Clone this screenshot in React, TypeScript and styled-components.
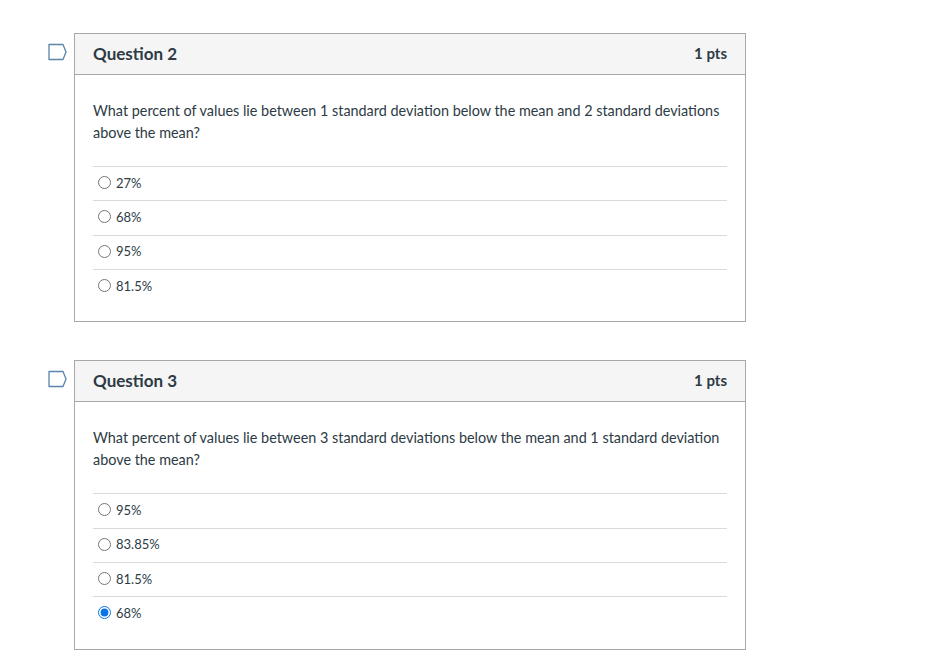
import styled, { createGlobalStyle } from 'styled-components';

const GlobalStyle = createGlobalStyle`
  body {
    margin: 0;
    background: #fff;
    font-family: Lato, "Open Sans", sans-serif;
    color: #2d3b45;
  }
`

const Page = styled.div`
  display: flex;
  flex-direction: column;
  gap: 38px;
  padding: 33px 0 0 48px;
`

const QuestionRow = styled.div`
  display: flex;
  align-items: flex-start;
  gap: 7px;
`

const Flag = styled.svg`
  flex: none;
  width: 19px;
  height: 18px;
  margin-top: 10px;
`

const Card = styled.section`
  width: 672px;
  box-sizing: border-box;
  border: 1px solid #a8a8a8;
`

const Header = styled.header`
  display: flex;
  align-items: center;
  justify-content: space-between;
  box-sizing: content-box;
  height: 38px;
  padding: 0 18px 2px;
  background: #f5f5f5;
  border-bottom: 1px solid #a8a8a8;
`

const Title = styled.h3`
  margin: 0;
  font-size: 17px;
  font-weight: 700;
  color: #2d3b45;
`

const Points = styled.span`
  font-size: 15px;
  font-weight: 700;
  color: #2d3b45;
`

const Body = styled.div`
  padding: 25px 18px 18px;
`

const Prompt = styled.p`
  margin: 0 0 22px;
  font-size: 14.4px;
  line-height: 22px;
`

const Answers = styled.ul`
  list-style: none;
  margin: 0;
  padding: 0;
`

const Answer = styled.li`
  display: flex;
  align-items: center;
  gap: 5px;
  box-sizing: border-box;
  height: 34.33px;
  padding: 0 0 2px 5px;
  border-top: 1px solid #dadada;
  font-size: 13px;
`

const Radio = styled.input`
  margin: 0;
  width: 13px;
  height: 13px;
  accent-color: #0b74e5;
`

type Question = {
  title: string
  pts: string
  prompt: string
  answers: string[]
  picked?: number
}

const questions: Question[] = [
  {
    title: 'Question 2',
    pts: '1 pts',
    prompt:
      'What percent of values lie between 1 standard deviation below the mean and 2 standard deviations above the mean?',
    answers: ['27%', '68%', '95%', '81.5%'],
  },
  {
    title: 'Question 3',
    pts: '1 pts',
    prompt:
      'What percent of values lie between 3 standard deviations below the mean and 1 standard deviation above the mean?',
    answers: ['95%', '83.85%', '81.5%', '68%'],
    picked: 3,
  },
]

function FlagIcon() {
  return (
    <Flag viewBox="0 0 19 18">
      <path d="M1 1.5 H15 L18 9 L15 16.5 H1 Z" fill="none" stroke="#5a84ab" strokeWidth="1.3" strokeLinejoin="round" />
    </Flag>
  )
}

export default function App() {
  return (
    <>
      <GlobalStyle />
      <Page>
        {questions.map((q, qi) => (
          <QuestionRow key={q.title}>
            <FlagIcon />
            <Card>
              <Header>
                <Title>{q.title}</Title>
                <Points>{q.pts}</Points>
              </Header>
              <Body>
                <Prompt>{q.prompt}</Prompt>
                <Answers>
                  {q.answers.map((a, ai) => (
                    <Answer key={a}>
                      <Radio type="radio" name={`q${qi}`} defaultChecked={q.picked === ai} />
                      {a}
                    </Answer>
                  ))}
                </Answers>
              </Body>
            </Card>
          </QuestionRow>
        ))}
      </Page>
    </>
  )
}
